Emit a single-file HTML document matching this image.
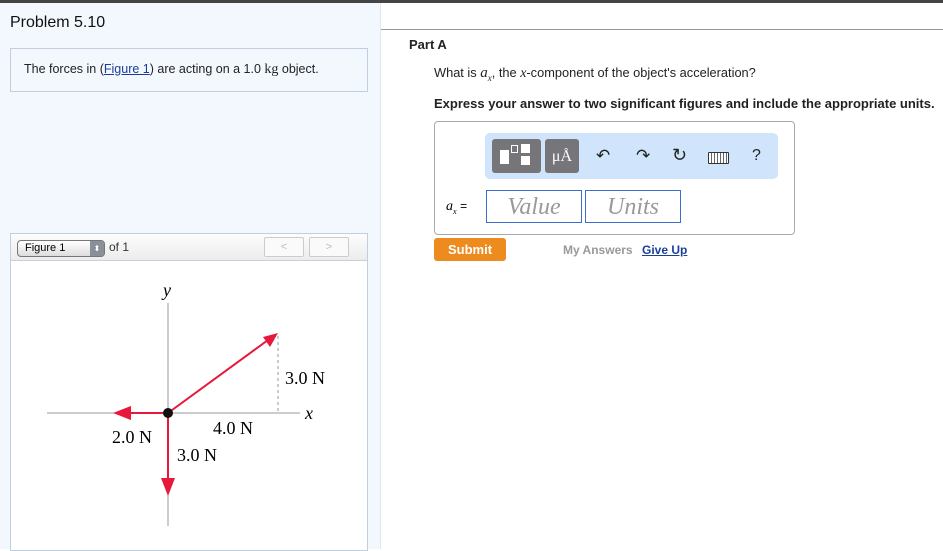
<!DOCTYPE html>
<html><head><style>
body{margin:0;width:943px;height:549px;overflow:hidden;background:#fff;font-family:"Liberation Sans",sans-serif;position:relative}
.a{position:absolute}
</style></head><body>
<div class="a" style="left:0;top:0;width:943px;height:3px;background:#444"></div>
<div class="a" style="left:0;top:3px;width:380px;height:546px;background:#f3f8fe;border-right:1px solid #dfe6ee"></div>
<div class="a" style="left:10px;top:14px;font-size:16px;color:#111">Problem 5.10</div>
<div class="a" style="left:10px;top:48px;width:356px;height:42px;border:1px solid #c0cedd;background:#f3f8fe"></div>
<div class="a" style="left:24px;top:62px;font-size:12.5px;color:#222">The forces in (<span style="color:#1a3f9a;text-decoration:underline">Figure 1</span>) are acting on a 1.0 <span style="font-family:'Liberation Serif',serif;font-size:14px">kg</span> object.</div>
<div class="a" style="left:10px;top:233px;width:356px;height:316px;border:1px solid #c0cedd;background:#fff"></div>
<div class="a" style="left:11px;top:234px;width:356px;height:26px;background:linear-gradient(#fdfdfd,#ececec);border-bottom:1px solid #ccd"></div>
<div class="a" style="left:17px;top:240px;height:17px;border:1px solid #777;border-radius:4px;background:linear-gradient(#fff,#ddd);font-size:11px;line-height:15px;padding-left:7px;box-sizing:border-box;width:88px">Figure 1</div>
<div class="a" style="left:90px;top:241px;width:14px;height:15px;background:#8a9099;border-radius:0 3px 3px 0;color:#fff;font-size:8px;text-align:center;line-height:15px">⬍</div>
<div class="a" style="left:109px;top:240px;font-size:12px;color:#333">of 1</div>
<div class="a" style="left:264px;top:237px;width:38px;height:18px;border:1px solid #ccc;border-radius:2px;background:#fafafa;color:#bbb;text-align:center;font-size:11px;line-height:18px">&lt;</div>
<div class="a" style="left:309px;top:237px;width:38px;height:18px;border:1px solid #ccc;border-radius:2px;background:#fafafa;color:#bbb;text-align:center;font-size:11px;line-height:18px">&gt;</div>
<svg class="a" style="left:0;top:0" width="380" height="549" font-family="Liberation Serif,serif" font-size="18">
<line x1="168" y1="303" x2="168" y2="526" stroke="#999" stroke-width="1"/>
<line x1="47" y1="413" x2="300" y2="413" stroke="#999" stroke-width="1"/>
<line x1="278" y1="336" x2="278" y2="413" stroke="#999" stroke-dasharray="3,3"/>
<line x1="168" y1="413" x2="268" y2="340" stroke="#e8173c" stroke-width="2"/>
<polygon points="278,333 263,337 270,347" fill="#e8173c"/>
<line x1="168" y1="413" x2="126" y2="413" stroke="#e8173c" stroke-width="2"/>
<polygon points="113,413 131,406 131,420" fill="#e8173c"/>
<line x1="168" y1="413" x2="168" y2="482" stroke="#e8173c" stroke-width="2"/>
<polygon points="168,496 161,478 175,478" fill="#e8173c"/>
<circle cx="168" cy="413" r="5" fill="#111"/>
<text x="163" y="296" font-style="italic">y</text>
<text x="305" y="419" font-style="italic">x</text>
<text x="285" y="384">3.0 N</text>
<text x="112" y="443">2.0 N</text>
<text x="213" y="434">4.0 N</text>
<text x="177" y="461">3.0 N</text>
</svg>
<div class="a" style="left:381px;top:29px;width:562px;height:1px;background:#999"></div>
<div class="a" style="left:409px;top:37px;font-size:13px;font-weight:bold;color:#222">Part A</div>
<div class="a" style="left:434px;top:65px;font-size:12.8px;color:#222">What is <i style="font-family:'Liberation Serif',serif;font-size:15px">a<sub style="font-size:9px">x</sub></i>, the <i style="font-family:'Liberation Serif',serif;font-size:14px">x</i>-component of the object's acceleration?</div>
<div class="a" style="left:434px;top:96px;font-size:13px;font-weight:bold;color:#222">Express your answer to two significant figures and include the appropriate units.</div>
<div class="a" style="left:434px;top:121px;width:361px;height:114px;border:1px solid #aaa;border-radius:4px;box-sizing:border-box"></div>
<div class="a" style="left:485px;top:133px;width:293px;height:46px;background:#d0e4fb;border-radius:5px"></div>
<div class="a" style="left:492px;top:139px;width:49px;height:34px;background:#76767a;border-radius:3px"></div>
<div class="a" style="left:500px;top:150px;width:9px;height:14px;background:#fff"></div>
<div class="a" style="left:511px;top:145px;width:5px;height:6px;border:1px solid #fff"></div>
<div class="a" style="left:521px;top:144px;width:9px;height:9px;background:#fff"></div>
<div class="a" style="left:521px;top:156px;width:9px;height:9px;background:#fff"></div>
<div class="a" style="left:545px;top:139px;width:34px;height:34px;background:#76767a;border-radius:3px;color:#fff;font-family:'Liberation Serif',serif;font-size:16px;text-align:center;line-height:36px">μÅ</div>
<div class="a" style="left:596px;top:146px;font-size:17px;color:#222">↶</div>
<div class="a" style="left:636px;top:146px;font-size:17px;color:#222">↷</div>
<div class="a" style="left:672px;top:145px;font-size:18px;color:#222">↻</div>
<div class="a" style="left:708px;top:152px;width:19px;height:10px;border:1px solid #333;border-radius:1px;background:repeating-linear-gradient(90deg,#fff 0 2px,#666 2px 3px)"></div>
<div class="a" style="left:752px;top:147px;font-size:16px;color:#222">?</div>
<div class="a" style="left:446px;top:199px;font-family:'Liberation Serif',serif;font-style:italic;font-size:14px">a<sub style="font-size:8px">x</sub> <span style="font-style:normal;font-family:'Liberation Sans';font-size:12px">=</span></div>
<div class="a" style="left:486px;top:190px;width:96px;height:33px;border:1px solid #3a6fcf;box-sizing:border-box;font-family:'Liberation Serif',serif;font-style:italic;font-size:24px;color:#999;text-align:center;line-height:32px">Value</div>
<div class="a" style="left:585px;top:190px;width:96px;height:33px;border:1px solid #3a6fcf;box-sizing:border-box;font-family:'Liberation Serif',serif;font-style:italic;font-size:24px;color:#999;text-align:center;line-height:32px">Units</div>
<div class="a" style="left:434px;top:238px;width:72px;height:23px;background:#ee8b1f;border-radius:3px;color:#fff;font-weight:bold;font-size:13px;text-align:center;line-height:23px">Submit</div>
<div class="a" style="left:563px;top:243px;font-size:12px;font-weight:bold;color:#999">My Answers</div>
<div class="a" style="left:642px;top:243px;font-size:12px;font-weight:bold;color:#1a3f9a;text-decoration:underline">Give Up</div>
</body></html>
